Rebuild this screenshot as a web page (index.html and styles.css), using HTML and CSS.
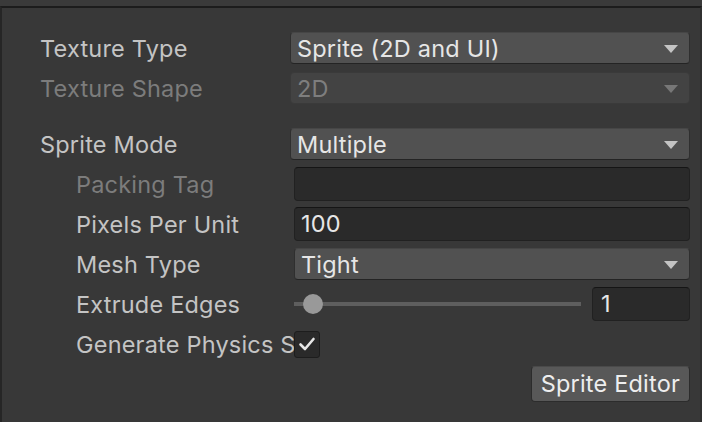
FILE: index.html
```html
<!DOCTYPE HTML>
<html>
<head>
 <title>Texture Import Settings</title>
 <meta name="viewport" content="width=device-width, initial-scale=1">
 <link rel="stylesheet" href="styles.css">
</head>

<body>
<div class="top-strip"></div>
<div class="inspector">

 <div class="row">
  <div class="label">Texture Type</div>
  <div class="dropdown">Sprite (2D and UI)<span class="arrow"></span></div>
 </div>
 <div class="row">
  <div class="label disabled">Texture Shape</div>
  <div class="dropdown disabled">2D<span class="arrow"></span></div>
 </div>

 <div class="spacer"></div>

 <div class="row">
  <div class="label">Sprite Mode</div>
  <div class="dropdown">Multiple<span class="arrow"></span></div>
 </div>
 <div class="row sub">
  <div class="label disabled">Packing Tag</div>
  <div class="text-field"></div>
 </div>
 <div class="row sub">
  <div class="label">Pixels Per Unit</div>
  <div class="text-field">100</div>
 </div>
 <div class="row sub">
  <div class="label">Mesh Type</div>
  <div class="dropdown">Tight<span class="arrow"></span></div>
 </div>
 <div class="row sub">
  <div class="label">Extrude Edges</div>
  <div class="slider-field">
   <div class="slider"><div class="track"></div><div class="thumb"></div></div>
   <div class="text-field small">1</div>
  </div>
 </div>
 <div class="row sub">
  <div class="label">Generate Physics Shape</div>
  <div class="checkbox">
   <svg width="20" height="20" viewBox="0 0 20 20"><path d="M3.5 10.5 L8 15 L16.5 5" fill="none" stroke="#e6e6e6" stroke-width="2.6" stroke-linecap="round" stroke-linejoin="round"/></svg>
  </div>
 </div>

 <div class="button-row">
  <div class="button">Sprite Editor</div>
 </div>

</div>
</body>
</html>
```

FILE: styles.css
```css
body{
 margin:0;
 background-color:#383838;
 font-family:Inter, "Noto Sans", sans-serif;
 font-size:23.5px;
 letter-spacing:0.2px;
 color:#c4c4c4;
 overflow:hidden;
}

.top-strip{
 height:6px;
 background-color:#3a3a3a;
}

.inspector{
 height:420px;
 border-top:2px solid #1c1c1c;
 border-left:2px solid #262626;
 border-right:2px solid #303030;
 padding:20px 10px 0 38px;
 box-sizing:border-box;
}

.row{
 display:grid;
 grid-template-columns:250px 1fr;
 align-items:center;
 height:40px;
}
.row.sub{
 grid-template-columns:218px 1fr;
 margin-left:36px;
}

.spacer{
 height:16px;
}

.label{
 white-space:nowrap;
 overflow:hidden;
}
.label.disabled{
 color:#7c7c7c;
}

.dropdown{
 position:relative;
 height:32px;
 line-height:31px;
 padding-left:6px;
 box-sizing:border-box;
 background-color:#515151;
 border:1px solid #2f2f2f;
 border-top-color:#464646;
 border-bottom-color:#242424;
 border-radius:4px;
 color:#e6e6e6;
}
.dropdown.disabled{
 background-color:#434343;
 border-color:#3a3a3a;
 color:#7e7e7e;
}
.arrow{
 position:absolute;
 right:11px;
 top:12px;
 width:0;
 height:0;
 border-left:7px solid transparent;
 border-right:7px solid transparent;
 border-top:8px solid #c4c4c4;
}
.dropdown.disabled .arrow{
 border-top-color:#777;
}

.text-field{
 height:34px;
 line-height:32px;
 padding-left:6px;
 box-sizing:border-box;
 background-color:#2a2a2a;
 border:1px solid #212121;
 border-top-color:#151515;
 border-radius:4px;
 color:#e6e6e6;
}
.text-field.small{
 width:98px;
 padding-left:8px;
}

.slider-field{
 display:flex;
 align-items:center;
 gap:11px;
}
.slider{
 position:relative;
 flex:1;
 height:20px;
}
.track{
 position:absolute;
 left:0;
 right:0;
 top:8px;
 height:4px;
 background-color:#5e5e5e;
}
.thumb{
 position:absolute;
 left:9px;
 top:0;
 width:20px;
 height:20px;
 border-radius:50%;
 background-color:#999;
}

.checkbox{
 width:26px;
 height:27px;
 box-sizing:border-box;
 background-color:#2a2a2a;
 border:1px solid #1d1d1d;
 border-radius:3px;
 display:flex;
 align-items:center;
 justify-content:center;
}

.button-row{
 display:flex;
 justify-content:flex-end;
 height:40px;
 align-items:center;
}
.button{
 height:36px;
 line-height:34px;
 padding:0 9px;
 box-sizing:border-box;
 background-color:#585858;
 border:1px solid #2c2c2c;
 border-top-color:#4a4a4a;
 border-radius:4px;
 color:#eeeeee;
}
```
